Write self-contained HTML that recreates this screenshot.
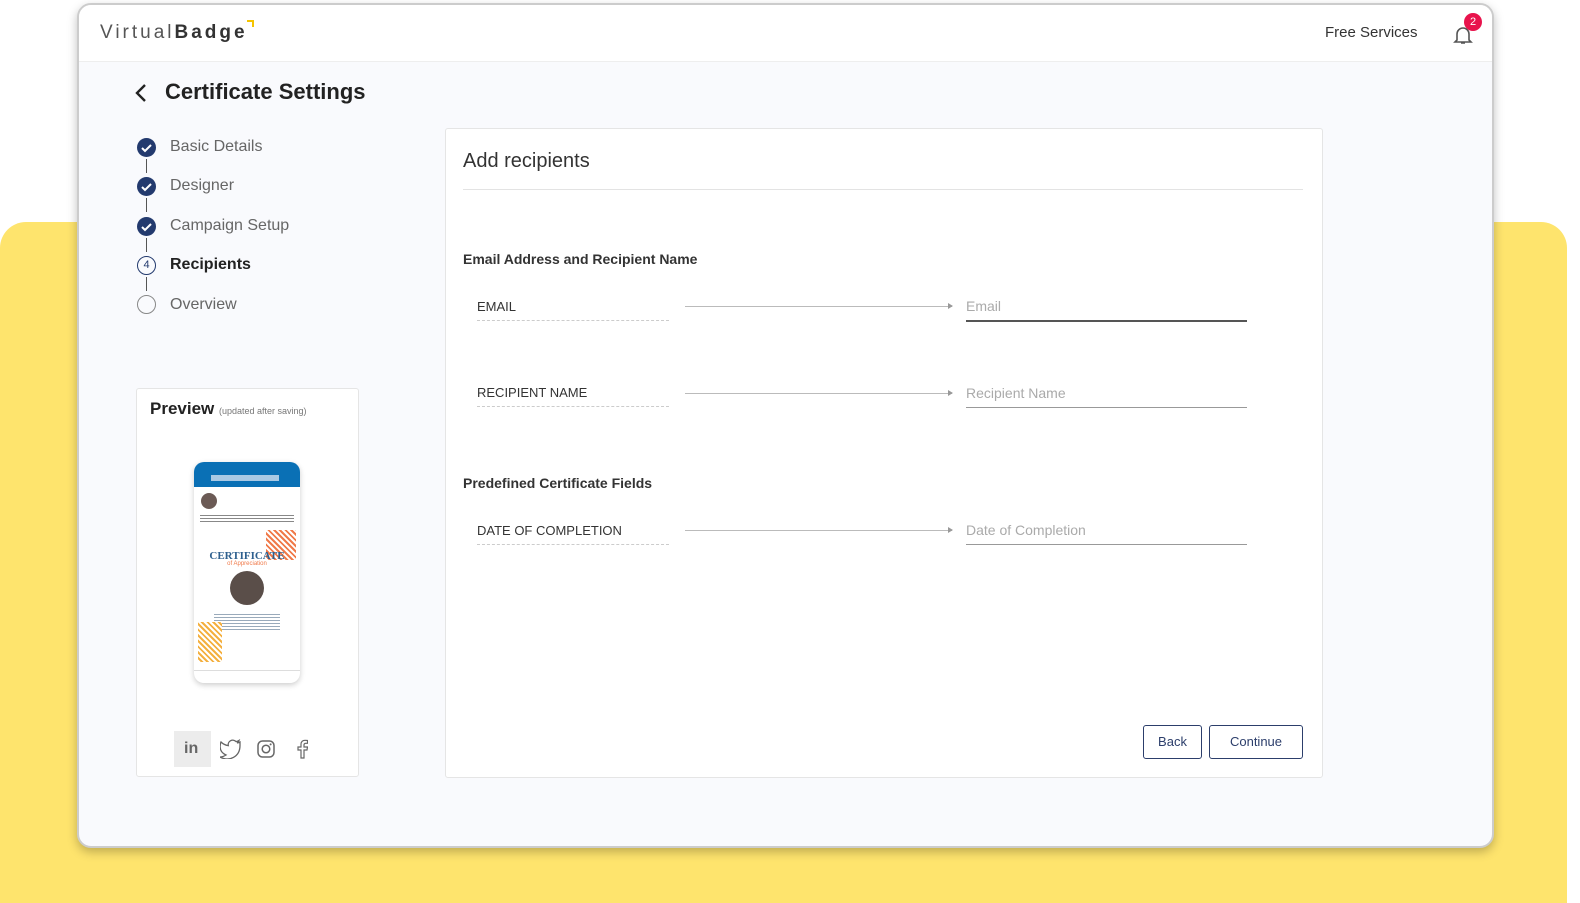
<!DOCTYPE html>
<html><head><meta charset="utf-8"><style>
*{box-sizing:border-box;margin:0;padding:0}
body{width:1580px;height:903px;position:relative;background:#fff;font-family:"Liberation Sans",sans-serif;overflow:hidden}
.yellow{position:absolute;left:0;top:222px;width:1567px;height:681px;background:#fee46d;border-radius:26px 26px 0 0}
.win{position:absolute;left:77px;top:3px;width:1417px;height:845px;background:#f9fafd;border-radius:14px;border:2px solid #ccc;box-shadow:0 4px 10px rgba(0,0,0,.25);overflow:hidden}
.hdr{height:57px;background:#fff;border-bottom:1px solid #eee;position:relative}
.abs{position:absolute}
.step{position:absolute;left:58px;font-size:16px;color:#666}
.circ{position:absolute;width:19px;height:19px;border-radius:50%;background:#233a6e;left:58px}
.vline{position:absolute;left:67px;width:1px;height:14px;background:#555}
.lbl{position:absolute;left:398px;width:192px;font-size:13px;color:#333;border-bottom:1px dashed #ccc;padding-bottom:6px}
.arrow{position:absolute;left:606px;width:267px;height:1px;background:#bbb}
.arrow:after{content:"";position:absolute;right:-1px;top:-3px;border-left:5px solid #999;border-top:3.5px solid transparent;border-bottom:3.5px solid transparent}
.inp{position:absolute;left:887px;width:281px;font-size:14px;color:#aaa;border-bottom:1px solid #999;padding-bottom:6px}
.btn{position:absolute;top:720px;height:34px;border:1px solid #2c3e6b;border-radius:3px;background:#fff;color:#2c3e6b;font-size:13px;text-align:center;line-height:32px}
</style></head><body>
<div class="yellow"></div>
<div class="win">
 <div class="hdr">
  <div class="abs" style="left:21px;top:17px;font-size:19px;letter-spacing:3px;color:#555">Virtual<b style="color:#333">Badge</b></div>
  <div class="abs" style="left:168px;top:15px;width:7px;height:7px;border-top:2px solid #f5c400;border-right:2px solid #f5c400"></div>
  <div class="abs" style="left:1246px;top:19px;font-size:15px;color:#333">Free Services</div>
  <svg class="abs" style="left:1374px;top:19px" width="20" height="22" viewBox="0 0 20 22"><path d="M4 16V10a6 6 0 0 1 12 0v6l2 2H2z M8 19h4" fill="none" stroke="#555" stroke-width="1.6"/></svg>
  <div class="abs" style="left:1385px;top:8px;width:18px;height:18px;border-radius:50%;background:#e8134c;color:#fff;font-size:11px;text-align:center;line-height:18px">2</div>
 </div>
 <svg class="abs" style="left:55px;top:78px" width="14" height="20"><path d="M11 2L3 10l8 8" fill="none" stroke="#222" stroke-width="2.4"/></svg>
 <div class="abs" style="left:86px;top:74px;font-size:22px;font-weight:bold;color:#222">Certificate Settings</div>

 <div class="circ" style="top:133px"></div><div class="vline" style="top:154px"></div>
 <div class="circ" style="top:172px"></div><div class="vline" style="top:193px"></div>
 <div class="circ" style="top:212px"></div><div class="vline" style="top:233px"></div>
 <div class="abs" style="left:58px;top:251px;width:19px;height:19px;border-radius:50%;border:1.5px solid #233a6e;font-size:11px;text-align:center;line-height:16px;color:#233a6e">4</div><div class="vline" style="top:272px"></div>
 <div class="abs" style="left:58px;top:290px;width:19px;height:19px;border-radius:50%;border:1.5px solid #888"></div>
 <svg class="abs" style="left:58px;top:133px" width="19" height="100"><g fill="none" stroke="#fff" stroke-width="2"><path d="M5 10l3 3 6-6"/><path d="M5 49l3 3 6-6"/><path d="M5 89l3 3 6-6"/></g></svg>
 <div class="step" style="left:91px;top:133px">Basic Details</div>
 <div class="step" style="left:91px;top:172px">Designer</div>
 <div class="step" style="left:91px;top:212px">Campaign Setup</div>
 <div class="step" style="left:91px;top:251px;color:#222;font-weight:bold">Recipients</div>
 <div class="step" style="left:91px;top:291px">Overview</div>

 <div class="abs" style="left:57px;top:383px;width:223px;height:389px;background:#fff;border:1px solid #e5e5e5;border-radius:3px">
  <div class="abs" style="left:13px;top:10px;font-size:17px;font-weight:bold;color:#222">Preview <span style="font-size:9px;font-weight:normal;color:#777">(updated after saving)</span></div>
  <div class="abs" style="left:57px;top:73px;width:106px;height:221px;border-radius:10px;background:#fff;box-shadow:0 2px 6px rgba(0,0,0,.2);overflow:hidden">
   <div style="height:25px;background:#0a70b5;border-radius:8px 8px 0 0;position:relative"><div class="abs" style="left:17px;top:13px;width:68px;height:6px;background:#a9c9e4"></div></div>
   <div class="abs" style="left:7px;top:31px;width:16px;height:16px;border-radius:50%;background:#6b5a55"></div>
   <div class="abs" style="left:6px;top:51px;width:94px;height:10px;background:repeating-linear-gradient(#fff 0 2px,#888 2px 3px)"></div>
   <div class="abs" style="left:72px;top:68px;width:30px;height:30px;background:repeating-linear-gradient(45deg,#fff 0 2px,#f07a4a 2px 4px)"></div>
   <div class="abs" style="left:0;top:88px;width:106px;text-align:center;font-family:'Liberation Serif',serif;font-size:11px;font-weight:bold;color:#2d5f8e">CERTIFICATE</div>
   <div class="abs" style="left:0;top:99px;width:106px;text-align:center;font-size:6px;color:#f07a4a">of Appreciation</div>
   <div class="abs" style="left:36px;top:109px;width:34px;height:34px;border-radius:50%;background:#5a4e49"></div>
   <div class="abs" style="left:20px;top:150px;width:66px;height:18px;background:repeating-linear-gradient(#fff 0 2px,#9ab 2px 3px)"></div>
   <div class="abs" style="left:4px;top:160px;width:24px;height:40px;background:repeating-linear-gradient(45deg,#fff 0 2px,#f4b040 2px 4px)"></div>
   <div class="abs" style="left:0;top:208px;width:106px;height:1px;background:#ddd"></div>
  </div>
  <div class="abs" style="left:37px;top:342px;width:37px;height:36px;background:#ececec"></div>
  <div class="abs" style="left:47px;top:351px;font-size:16px;color:#666;font-weight:bold">in</div>
  <svg class="abs" style="left:83px;top:350px" width="22" height="20"><path d="M20 3c-1 .5-2 .8-3 1 1-.7 1.6-1.5 2-2.6-1 .6-2 1-3 1.2A4.5 4.5 0 0 0 8.3 6.6 12.8 12.8 0 0 1 1 3s-4 9 5 13c-2 1.3-4 2-6 2 9 5 20 0 20-11.5z" fill="none" stroke="#666" stroke-width="1.3"/></svg>
  <svg class="abs" style="left:120px;top:351px" width="18" height="18"><rect x="1" y="1" width="16" height="16" rx="4.5" fill="none" stroke="#666" stroke-width="1.5"/><circle cx="9" cy="9" r="3.8" fill="none" stroke="#666" stroke-width="1.5"/><circle cx="13.6" cy="4.4" r="1" fill="#666"/></svg>
  <svg class="abs" style="left:159px;top:350px" width="12" height="20"><path d="M8 19V11h3l.5-3H8V6c0-1 .4-1.7 1.7-1.7H11.5V1.5C11 1.4 10 1.3 9 1.3 6.7 1.3 5 2.7 5 5.3V8H2v3h3v8z" fill="none" stroke="#666" stroke-width="1.2"/></svg>
 </div>

 <div class="abs" style="left:366px;top:123px;width:878px;height:650px;background:#fff;border:1px solid #e5e5e5;border-radius:3px"></div>
 <div class="abs" style="left:384px;top:145px;font-size:20px;color:#333">Add recipients</div>
 <div class="abs" style="left:384px;top:184px;width:840px;height:1px;background:#e3e3e3"></div>
 <div class="abs" style="left:384px;top:246px;font-size:14px;font-weight:bold;color:#333">Email Address and Recipient Name</div>
 <div class="lbl" style="top:294px">EMAIL</div><div class="arrow" style="top:301px"></div>
 <div class="inp" style="top:293px;border-bottom:2px solid #555">Email</div>
 <div class="lbl" style="top:380px">RECIPIENT NAME</div><div class="arrow" style="top:388px"></div>
 <div class="inp" style="top:380px">Recipient Name</div>
 <div class="abs" style="left:384px;top:470px;font-size:14px;font-weight:bold;color:#333">Predefined Certificate Fields</div>
 <div class="lbl" style="top:518px">DATE OF COMPLETION</div><div class="arrow" style="top:525px"></div>
 <div class="inp" style="top:517px">Date of Completion</div>
 <div class="btn" style="left:1064px;width:59px">Back</div>
 <div class="btn" style="left:1130px;width:94px">Continue</div>
</div>
</body></html>
